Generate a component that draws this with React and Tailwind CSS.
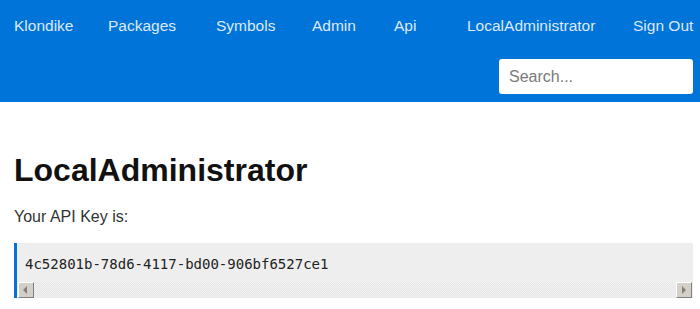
import React from 'react'

const navItems = [
  { label: 'Klondike', cls: 'w-[94px]' },
  { label: 'Packages', cls: 'w-[108px]' },
  { label: 'Symbols', cls: 'w-[96px]' },
  { label: 'Admin', cls: 'w-[82px]' },
  { label: 'Api', cls: 'w-[73px]' },
  { label: 'LocalAdministrator', cls: 'w-[166px]' },
  { label: 'Sign Out', cls: '' },
]

const ScrollButton = ({ dir }) => (
  <div className="w-[16px] h-[16px] bg-[#d4d0c8] border border-t-white border-l-white border-r-[#808080] border-b-[#808080] flex items-center justify-center shrink-0">
    <svg width="6" height="8" viewBox="0 0 6 8">
      {dir === 'left' ? <path d="M4 0 L0 4 L4 8 Z" fill="#808080" /> : <path d="M1 0 L5 4 L1 8 Z" fill="#808080" />}
    </svg>
  </div>
)

export default function App() {
  return (
    <div className="w-[700px] h-[309px] bg-white overflow-hidden" style={{ fontFamily: '"Liberation Sans", Arial, sans-serif' }}>
      {/* Navbar */}
      <header className="bg-[#0074d9] px-[14px] pb-[8px]">
        <nav className="h-[51px] flex items-center text-[15.5px] text-[#dde9f8]">
          {navItems.map((item) => (
            <a key={item.label} className={`whitespace-nowrap shrink-0 ${item.cls}`}>{item.label}</a>
          ))}
        </nav>
        <div className="mt-[8px] flex justify-end">
          <input
            placeholder="Search..."
            className="w-[194px] h-[35px] mr-[-7px] rounded-[3px] bg-white px-[10px] text-[16px] placeholder:text-[#7a7a7a] outline-none"
          />
        </div>
      </header>

      {/* Content */}
      <main className="px-[14px] pt-[49px]">
        <h1 className="text-[32px] font-bold leading-[38px] text-[#111]">LocalAdministrator</h1>
        <p className="mt-[17px] text-[16px] leading-[22px] text-[#333]">Your API Key is:</p>
        <div className="mt-[15px] mr-[-7px] border-l-[3px] border-[#0074d9] bg-[#eeeeee]">
          <pre className="px-[8px] pt-[13px] pb-[9px] text-[14px] leading-[17px] text-[#222]" style={{ fontFamily: '"DejaVu Sans Mono", monospace' }}>
            4c52801b-78d6-4117-bd00-906bf6527ce1
          </pre>
          <div className="flex items-center h-[16px] mx-[1px] bg-[repeating-conic-gradient(#e6e6e6_0_25%,#f2f2f2_0_50%)] bg-[length:2px_2px]">
            <ScrollButton dir="left" />
            <div className="flex-1" />
            <ScrollButton dir="right" />
          </div>
        </div>
      </main>
    </div>
  )
}
